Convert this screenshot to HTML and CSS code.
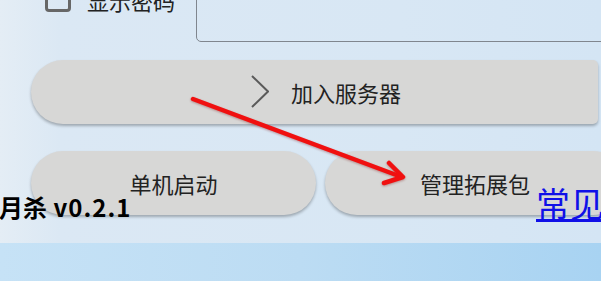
FILE: index.html
```html
<!DOCTYPE html>
<html lang="zh">
<head>
<meta charset="utf-8">
<title>新月杀</title>
<link rel="stylesheet" href="styles.css">
</head>
<body>
<div class="screen">
  <div class="top">
    <div class="check-group">
      <span class="check"></span>
      <span class="check-label">显示密码</span>
    </div>
    <div class="input"></div>
  </div>
  <div class="btn btn-join">
    <svg class="chev" width="18" height="34" viewBox="0 0 18 34"><path d="M1 1 L17 16.5 L1 32" fill="none" stroke="#5a5a5a" stroke-width="2"/></svg>
    <span class="btn-text">加入服务器</span>
  </div>
  <div class="btn-row">
    <div class="btn btn-solo"><span class="btn-text">单机启动</span></div>
    <div class="btn btn-pack"><span class="btn-text">管理拓展包</span></div>
  </div>
  <div class="title">新月杀<span class="ver"> v0.2.1</span></div>
  <a class="faq" href="#">常见问题</a>
  <svg class="arrow" width="601" height="281" viewBox="0 0 601 281">
    <g fill="none" stroke="#f01010" stroke-width="4.5" stroke-linecap="round" stroke-linejoin="round">
      <path d="M193 99 L399 176"/>
      <path d="M389 163 L403 177 L384 183"/>
    </g>
  </svg>
</div>
</body>
</html>
```
FILE: styles.css
```css
html, body {
  margin: 0;
  padding: 0;
}
body {
  width: 601px;
  height: 281px;
  overflow: hidden;
  font-family: "Noto Sans CJK SC", "Noto Sans", sans-serif;
}
.screen {
  position: relative;
  width: 601px;
  height: 281px;
  overflow: hidden;
  background:
    linear-gradient(to bottom, rgba(0,0,0,0) 243px, #c2e0f5 243px),
    linear-gradient(to right, #e4edf5 0px, #dbe8f4 60px, #d8e7f4 400px, #d4e5f4 601px);
}
.screen::after {
  content: "";
  position: absolute;
  left: 0;
  top: 243px;
  width: 601px;
  height: 38px;
  background: linear-gradient(to right, #c6e2f6 0%, #bcdcf3 50%, #a8d3f2 100%);
}
.top {
  display: flex;
  margin-top: -20px;
  height: 62px;
}
.check-group {
  width: 196px;
  flex-shrink: 0;
  display: flex;
  align-items: flex-start;
  box-sizing: border-box;
  padding-left: 45px;
}
.check {
  display: block;
  width: 26px;
  height: 26px;
  box-sizing: border-box;
  border: 3px solid #676767;
  border-radius: 4px;
  margin-top: 6px;
}
.check-label {
  margin-left: 16px;
  margin-top: 9px;
  font-size: 22px;
  line-height: 22px;
  color: #222;
}
.input {
  flex: 1;
  height: 62px;
  box-sizing: border-box;
  border: 1px solid #80868e;
  border-radius: 5px;
  margin-right: -10px;
}
.btn {
  height: 64px;
  box-sizing: border-box;
  background: #d7d7d6;
  border-radius: 32px;
  box-shadow: 0 2px 3px rgba(0, 0, 0, 0.28);
  display: flex;
  align-items: center;
  color: #222;
  font-size: 22px;
  flex-shrink: 0;
}
.btn-text {
  line-height: 22px;
}
.btn-join {
  margin: 18px 3px 0 31px;
  border-radius: 32px 5px 5px 32px;
  padding-left: 220px;
}
.chev {
  display: block;
  margin-right: 22px;
}
.btn-row {
  display: flex;
  gap: 9px;
  margin-top: 27px;
  margin-left: 31px;
}
.btn-solo {
  width: 285px;
  justify-content: center;
}
.btn-pack {
  width: 300px;
  justify-content: center;
}
.title {
  position: absolute;
  left: -25px;
  top: 195px;
  font-size: 24px;
  line-height: 24px;
  font-weight: bold;
  color: #000;
  white-space: nowrap;
  z-index: 2;
}
.ver {
  letter-spacing: 1px;
}
.faq {
  position: absolute;
  left: 536px;
  top: 186px;
  font-size: 34px;
  line-height: 34px;
  color: #1010e8;
  white-space: nowrap;
  z-index: 2;
}
.arrow {
  position: absolute;
  left: 0;
  top: 0;
  z-index: 3;
  filter: drop-shadow(0 1px 1px rgba(120, 0, 0, 0.35));
}
```
